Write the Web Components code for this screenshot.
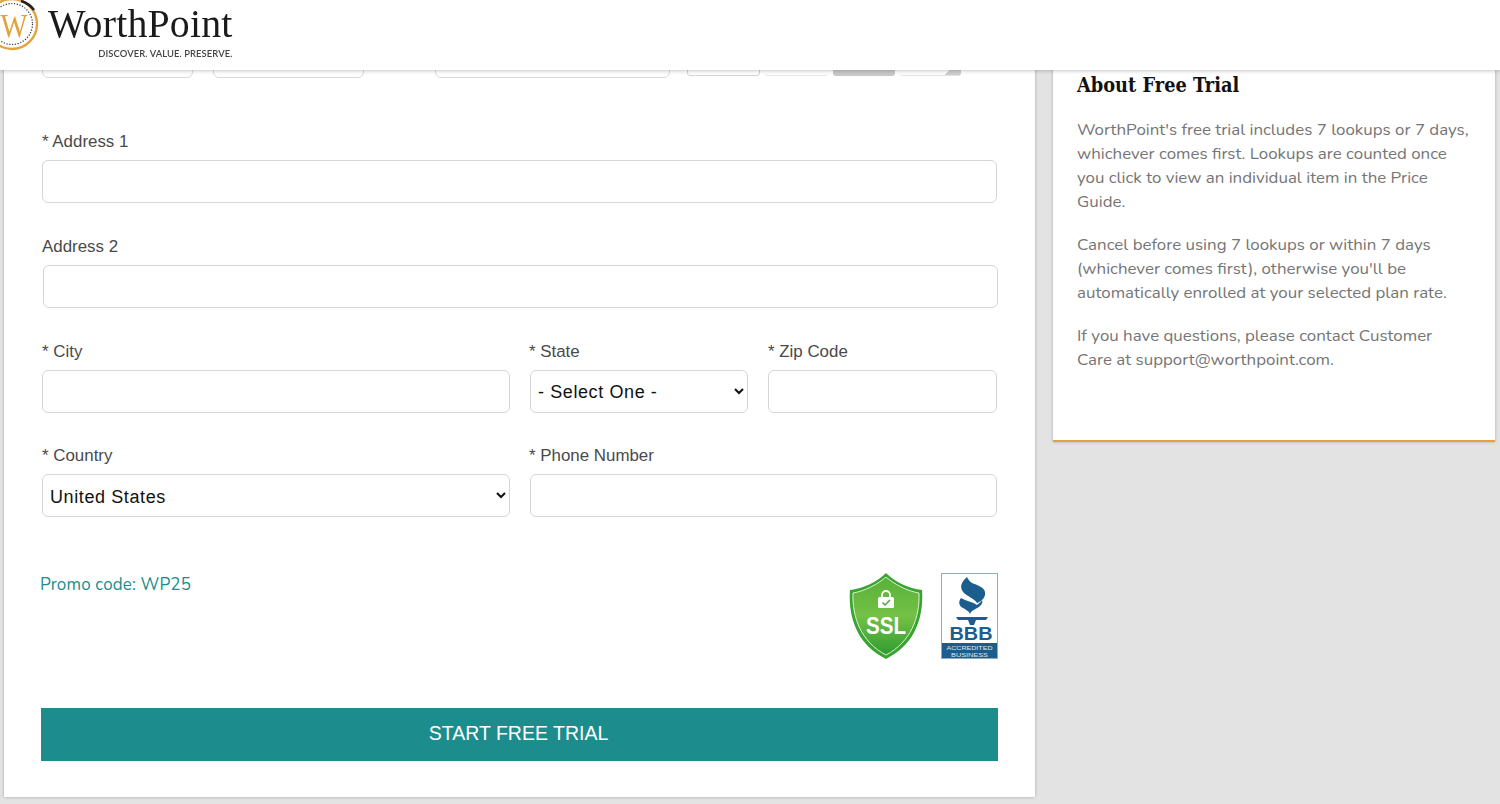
<!DOCTYPE html>
<html>
<head>
<meta charset="utf-8">
<title>WorthPoint - Start Free Trial</title>
<style>
  html, body { margin: 0; height: 100%; overflow: hidden; background: #e3e3e3; }
  body { font-family: "Liberation Sans", Arial, sans-serif; }
</style>
</head>
<body>
<wp-header></wp-header>
<wp-page>
  <wp-card>
    <wp-top-row></wp-top-row>
    <wp-form-grid>
      <wp-field style="grid-column: 1 / -1">* Address 1</wp-field>
      <wp-field style="grid-column: 1 / -1; margin: 0 -1px 0 1px" label-shift="-1">Address 2</wp-field>
      <wp-field>* City</wp-field>
      <wp-field type="select" value="- Select One -" label-shift="-1">* State</wp-field>
      <wp-field>* Zip Code</wp-field>
      <wp-field type="select" value="United States">* Country</wp-field>
      <wp-field style="grid-column: 2 / -1" label-shift="-1">* Phone Number</wp-field>
    </wp-form-grid>
    <wp-trust-row>Promo code: WP25</wp-trust-row>
    <wp-button>START FREE TRIAL</wp-button>
  </wp-card>
  <wp-side heading="About Free Trial">
    <p>WorthPoint's free trial includes 7 lookups or 7 days, whichever comes first. Lookups are counted once you click to view an individual item in the Price Guide.</p>
    <p>Cancel before using 7 lookups or within 7 days (whichever comes first), otherwise you'll be automatically enrolled at your selected plan rate.</p>
    <p>If you have questions, please contact Customer Care at support@worthpoint.com.</p>
  </wp-side>
</wp-page>

<script>
class WpHeader extends HTMLElement {
  constructor() {
    super();
    this.attachShadow({mode: 'open'}).innerHTML = `
<style>
  :host {
    display: flex;
    position: fixed;
    top: 0; left: 0; right: 0;
    height: 70px;
    background: #fff;
    box-shadow: 0 1px 4px rgba(0,0,0,.22);
    z-index: 10;
  }
  svg { width: 48px; height: 70px; flex: none; }
  .brand { display: flex; flex-direction: column; align-items: flex-end; }
  .name {
    font: 39.8px/1 "Liberation Serif", serif;
    color: #1a1a1a;
    margin-top: 5px;
    letter-spacing: .2px;
  }
  .tag {
    font: 600 9.4px/1 "Lato", sans-serif;
    color: #444;
    margin-top: 4px;
    letter-spacing: .1px;
  }
</style>
<svg viewBox="0 0 48 70">
  <circle cx="12" cy="24" r="25" fill="none" stroke="#e3a23c" stroke-width="2.4"/>
  <path d="M21 1 A25 25 0 0 1 34 10" fill="none" stroke="#222" stroke-width="2.6"/>
  <circle cx="12" cy="24" r="20.5" fill="none" stroke="#333" stroke-width="1.2" stroke-dasharray="1.2 1.6"/>
  <text x="14" y="37" text-anchor="middle" font-family="Liberation Serif" font-size="33" textLength="27" lengthAdjust="spacingAndGlyphs" fill="#e3a23c">W</text>
</svg>
<div class="brand">
  <div class="name">WorthPoint</div>
  <div class="tag">DISCOVER. VALUE. PRESERVE.</div>
</div>`;
  }
}
customElements.define('wp-header', WpHeader);

class WpPage extends HTMLElement {
  constructor() {
    super();
    this.attachShadow({mode: 'open'}).innerHTML = `
<style>
  :host { display: flex; align-items: flex-start; gap: 18px; padding-left: 4px; }
</style>
<slot></slot>`;
  }
}
customElements.define('wp-page', WpPage);

class WpCard extends HTMLElement {
  constructor() {
    super();
    this.attachShadow({mode: 'open'}).innerHTML = `
<style>
  :host {
    display: block;
    flex: none;
    box-sizing: border-box;
    width: 1031px;
    height: 797px;
    padding: 35px 37px 0 37px;
    background: #fff;
    box-shadow: 0 0 3px rgba(0,0,0,.28);
  }
</style>
<slot></slot>`;
  }
}
customElements.define('wp-card', WpCard);

// payment row, almost all of it is hidden under the fixed header
class WpTopRow extends HTMLElement {
  constructor() {
    super();
    this.attachShadow({mode: 'open'}).innerHTML = `
<style>
  :host { display: flex; align-items: flex-start; height: 43px; margin: 0 0 54px 1px; }
  .in {
    box-sizing: border-box; height: 43px;
    background: #fff; border: 1px solid #d9d9d9; border-radius: 6px;
  }
  .cards { display: flex; gap: 5px; margin-left: 17px; }
  .c { height: 41px; border-radius: 0 0 3px 3px; box-sizing: border-box; background: #fff; }
  .c1 { width: 73px; border: 1px solid #d4d4d4; }
  .c2 { width: 63px; margin-left: 0; border-bottom: 1px solid #e6e6e6; }
  .c3 { width: 62px; background: #c9c9c9; }
  .c4 { width: 61px; border-bottom: 1px solid #e3e3e3; background: linear-gradient(135deg, #fff 84%, #cfcfcf 84%); }
</style>
<div class="in" style="width:151px"></div>
<div class="in" style="width:151px;margin-left:20px"></div>
<div class="in" style="width:235px;margin-left:71px"></div>
<div class="cards">
  <div class="c c1"></div><div class="c c2"></div><div class="c c3"></div><div class="c c4"></div>
</div>`;
  }
}
customElements.define('wp-top-row', WpTopRow);

class WpFormGrid extends HTMLElement {
  constructor() {
    super();
    this.attachShadow({mode: 'open'}).innerHTML = `
<style>
  :host {
    display: grid;
    grid-template-columns: 468px 218px 229px;
    column-gap: 20px;
    row-gap: 33.8px;
    margin-left: 1px;
    width: 955px;
  }
</style>
<slot></slot>`;
  }
}
customElements.define('wp-form-grid', WpFormGrid);

class WpField extends HTMLElement {
  connectedCallback() {
    const isSelect = this.getAttribute('type') === 'select';
    const shift = this.getAttribute('label-shift') || 0;
    const control = isSelect
      ? `<select><option>${this.getAttribute('value')}</option></select>`
      : `<input type="text">`;
    this.attachShadow({mode: 'open'}).innerHTML = `
<style>
  :host { display: block; min-width: 0; }
  label {
    display: block;
    font: 16.9px/20px "Liberation Sans", Arial, sans-serif;
    color: #4a4a4a;
    margin: 0 0 9px ${shift}px;
    height: 19px;
  }
  input, select {
    display: block;
    box-sizing: border-box;
    width: 100%;
    height: 43px;
    background: #fff;
    border: 1px solid #d6d6d6;
    border-radius: 6px;
    outline: none;
  }
  select {
    font: 18px "Liberation Sans", Arial, sans-serif;
    letter-spacing: .6px;
    color: #111;
    padding: 2px 3px 0;
  }
</style>
<label><slot></slot></label>
${control}`;
  }
}
customElements.define('wp-field', WpField);

class WpTrustRow extends HTMLElement {
  constructor() {
    super();
    this.attachShadow({mode: 'open'}).innerHTML = `
<style>
  :host {
    display: flex;
    justify-content: space-between;
    align-items: flex-start;
    height: 86px;
    margin: 56px 0 49px -1px;
    width: 958px;
  }
  .promo { font: 17px/24px "Nunito", "Noto Sans", sans-serif; color: #1c8c8c; letter-spacing: .15px; }
  .seals { display: flex; gap: 18px; }
  svg { display: block; height: 86px; }
</style>
<div class="promo"><slot></slot></div>
<div class="seals">
  <svg width="74" viewBox="0 0 74 86">
    <defs>
      <linearGradient id="sh" x1="0" y1="0" x2="0" y2="1">
        <stop offset="0" stop-color="#58b03a"/><stop offset=".5" stop-color="#74c146"/><stop offset="1" stop-color="#2f9c30"/>
      </linearGradient>
    </defs>
    <path d="M37 0 C45 8 60 16 73 17 C75 44 66 72 37 86 C8 72 -1 44 1 17 C14 16 29 8 37 0Z" fill="#3aa431"/>
    <path d="M37 4 C45 11 58 18 70 20 C71 44 62 69 37 82 C12 69 3 44 4 20 C16 18 29 11 37 4Z" fill="url(#sh)" stroke="#dcf0cf" stroke-width="1"/>
    <path d="M33 24 v-2 a4 4 0 0 1 8 0 v2" fill="none" stroke="#fff" stroke-width="1.8"/>
    <rect x="29" y="24" width="16" height="11" rx="1.500" fill="#fff"/>
    <path d="M33.500 29.500 l2.500 2.500 l5 -5" fill="none" stroke="#4aa836" stroke-width="1.500"/>
    <text x="37" y="61" text-anchor="middle" font-family="Liberation Sans" font-weight="700" font-size="24" textLength="40" lengthAdjust="spacingAndGlyphs" fill="#fff">SSL</text>
  </svg>
  <svg width="57" viewBox="0 0 57 86">
    <rect x=".5" y=".5" width="56" height="85" fill="#fff" stroke="#8fabc1"/>
    <path d="M26 4 C20 9 18 15 23 20 C27 24 33 25 36 30 C41 28 45 24 44 19 C43 14 36 12 31 10 C28 8 27 6 26 4Z" fill="#1b5e8e"/>
    <path d="M20 25 C17 29 18 33 22 35 C25 37 28 38 29 41 C30 37 36 36 39 33 C41 31 42 29 41 27 C39 30 37 31 36 32 C32 29 25 28 20 25Z" fill="#1b5e8e"/>
    <path d="M15 44 H47 L45 47 H35 L33 52 H29 L27 47 H17Z" fill="#1b5e8e"/>
    <text x="30" y="67" text-anchor="middle" font-family="Liberation Sans" font-weight="700" font-size="19" textLength="43" lengthAdjust="spacingAndGlyphs" fill="#1b5e8e">BBB</text>
    <rect x="1" y="70" width="55" height="15" fill="#1b5e8e"/>
    <text x="28.500" y="77" text-anchor="middle" font-family="Liberation Sans" font-size="6" textLength="46" lengthAdjust="spacingAndGlyphs" fill="#dce8f0">ACCREDITED</text>
    <text x="28.500" y="83.500" text-anchor="middle" font-family="Liberation Sans" font-size="6" textLength="37" lengthAdjust="spacingAndGlyphs" fill="#dce8f0">BUSINESS</text>
  </svg>
</div>`;
  }
}
customElements.define('wp-trust-row', WpTrustRow);

class WpButton extends HTMLElement {
  constructor() {
    super();
    this.attachShadow({mode: 'open'}).innerHTML = `
<style>
  :host { display: block; width: 957px; margin-left: 0; }
  button {
    display: block;
    width: 100%;
    height: 53px;
    border: 0;
    background: #1c8c8c;
    color: #fff;
    font: 19.5px "Liberation Sans", Arial, sans-serif;
    padding: 0 2px 2px 0;
  }
</style>
<button><slot></slot></button>`;
  }
}
customElements.define('wp-button', WpButton);

class WpSide extends HTMLElement {
  connectedCallback() {
    this.attachShadow({mode: 'open'}).innerHTML = `
<style>
  :host {
    display: block;
    flex: none;
    box-sizing: border-box;
    width: 442px;
    height: 442px;
    padding: 71px 24px 0 24px;
    background: #fff;
    border-bottom: 2px solid #e0a23f;
    box-shadow: 0 0 3px rgba(0,0,0,.25);
  }
  h3 {
    margin: 0 0 19px;
    font: 700 19.8px/28px "DejaVu Serif", serif;
    font-stretch: condensed;
    color: #111;
  }
  ::slotted(p) {
    margin: 0 0 19px;
    font: 16.9px/24px "Nunito", "Noto Sans", sans-serif;
    color: #757575;
  }
</style>
<h3>${this.getAttribute('heading')}</h3>
<slot></slot>`;
  }
}
customElements.define('wp-side', WpSide);
</script>
</body>
</html>
